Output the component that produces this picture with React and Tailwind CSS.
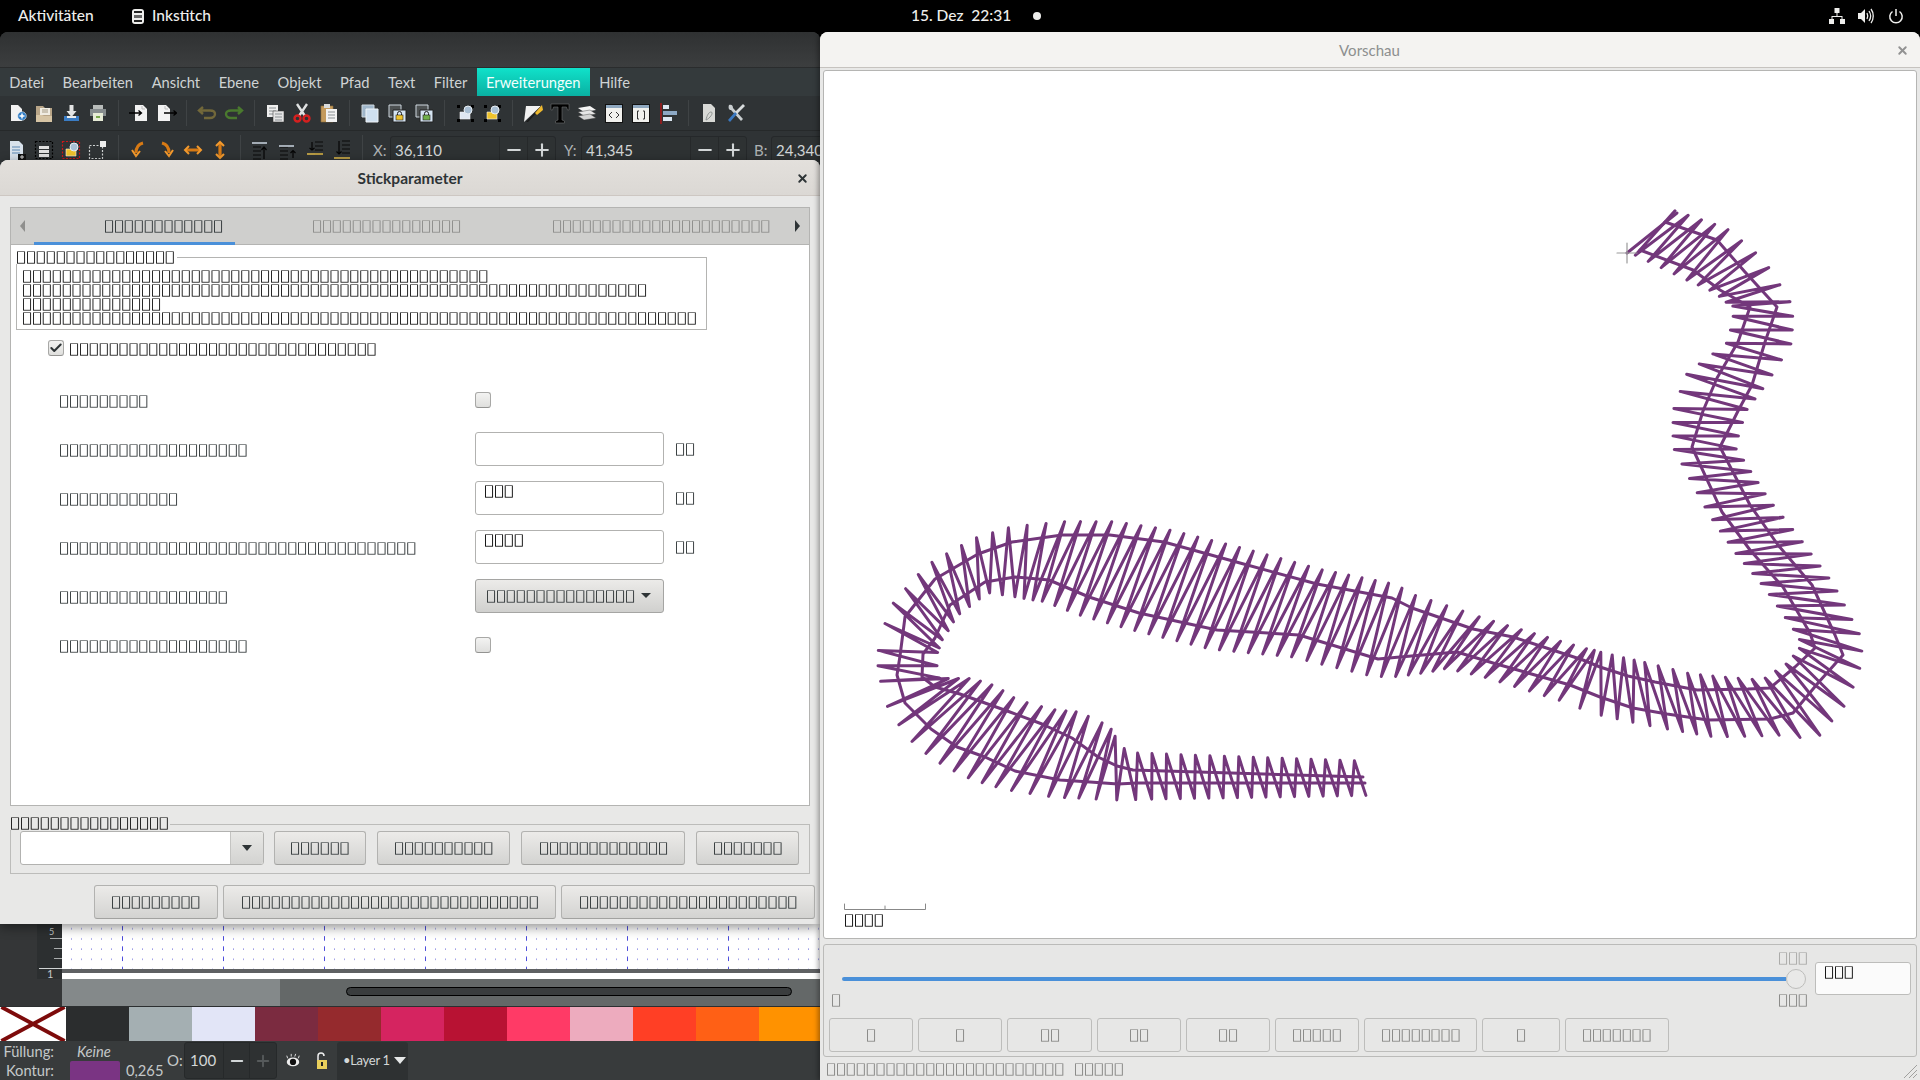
import { Check, Minus, Plus, X } from "lucide-react"

const PURPLE = "#73377b"

// rail A xy, rail B xy, how far the stitch overshoots each rail
const rungs = [
  [1665, 222, 1640, 250, 15, 7], [1717, 240, 1693, 270, 15, 12], [1745, 272, 1720, 290, 22, 5], [1777, 307, 1750, 307, 16, 15],
  [1765, 342, 1738, 342, 27, 10], [1752, 385, 1717, 378, 12, 30], [1738, 411, 1703, 411, 8, 30], [1720, 447, 1692, 447, 15, 19],
  [1750, 505, 1722, 512, 20, 13], [1778, 545, 1750, 550, 24, 15], [1812, 585, 1783, 587, 21, 18], [1835, 635, 1810, 633, 26, 15],
  [1843, 655, 1815, 648, 20, 13], [1818, 683, 1795, 667, 35, 8], [1793, 713, 1770, 688, 35, 11], [1770, 719, 1748, 689, 20, 13],
  [1708, 720, 1697, 690, 18, 17], [1667, 714, 1655, 682, 17, 20], [1633, 708, 1628, 676, 15, 18], [1600, 697, 1600, 667, 18, 15],
  [1570, 685, 1583, 660, 18, 12], [1493, 663, 1513, 637, 17, 10], [1457, 652, 1473, 629, 20, 14], [1400, 657, 1412, 608, 20, 13],
  [1378, 659, 1392, 598, 18, 14], [1299, 635, 1317, 584, 23, 15], [1217, 630, 1240, 563, 20, 15], [1139, 613, 1164, 542, 18, 13],
  [1089, 597, 1110, 535, 20, 14], [1049, 580, 1062, 535, 22, 14], [1015, 577, 1012, 542, 20, 15], [985, 582, 978, 554, 11, 16],
  [950, 605, 935, 579, 13, 16], [935, 638, 905, 617, 7, 18], [923, 654, 900, 656, 14, 23], [922, 677, 897, 675, 15, 18],
  [935, 687, 905, 703, 17, 18], [960, 694, 931, 729, 20, 23], [985, 703, 957, 747, 20, 23], [1010, 712, 985, 757, 14, 26],
  [1042, 724, 1015, 771, 17, 21], [1072, 738, 1060, 780, 27, 18], [1098, 757, 1090, 782, 33, 17], [1117, 766, 1118, 784, 29, 16],
  [1133, 770, 1137, 783, 18, 17], [1363, 777, 1365, 783, 17, 13],
]

function buildStitches() {
  const lens = [0]
  for (let i = 1; i < rungs.length; i++) {
    const [a, b, c, d] = rungs[i - 1]
    const [e, f, g, h] = rungs[i]
    lens.push(lens[i - 1] + Math.hypot((e + g - a - c) / 2, (f + h - b - d) / 2))
  }
  const total = lens[lens.length - 1]
  let zig = ""
  let i = 0
  for (let s = 0; s <= total; s += 14.4) {
    while (i < lens.length - 2 && lens[i + 1] < s) i++
    const t = (s - lens[i]) / (lens[i + 1] - lens[i])
    const p = rungs[i].map((v, k) => v + (rungs[i + 1][k] - v) * t)
    const d = Math.hypot(p[0] - p[2], p[1] - p[3]) || 1
    const ux = (p[0] - p[2]) / d
    const uy = (p[1] - p[3]) / d
    const a = `${(p[0] + ux * p[4]).toFixed(1)} ${(p[1] + uy * p[4]).toFixed(1)}`
    const b = `${(p[2] - ux * p[5]).toFixed(1)} ${(p[3] - uy * p[5]).toFixed(1)}`
    zig += `${zig ? "L" : "M"}${a}L${b}`
  }
  const railA = "M" + rungs.map((r) => `${r[0]} ${r[1]}`).join("L")
  const railB = "M" + rungs.map((r) => `${r[2]} ${r[3]}`).join("L")
  return { zig, railA, railB }
}

const stitches = buildStitches()

// the labels in this screenshot have no glyphs, they show up as empty boxes
const T = ({ n, className = "" }) => (
  <span className={"inline-block h-[14px] scale-y-[0.82] will-change-transform font-['DejaVu_Sans'] text-[16.550px] leading-[14px] whitespace-nowrap " + className}>
    {"\uE000".repeat(n)}
  </span>
)

const Btn = ({ n, className = "" }) => (
  <div className={"flex h-[34px] items-center justify-center rounded-[3px] border border-[#b2b2b0] border-b-[#a2a2a0] bg-linear-to-b from-[#ecebe9] to-[#d3d3d1] text-[#2e3436] " + className}>
    <T n={n} />
  </div>
)

const Box = ({ checked }) => (
  <div className="flex h-4 w-4 items-center justify-center rounded-[3px] border border-[#a8a8a6] border-b-[#939391] bg-linear-to-b from-[#f3f3f2] to-[#dfdfdd]">
    {checked && <Check size={14} strokeWidth={3.5} className="text-[#2e3436]" />}
  </div>
)

const Field = ({ n }) => (
  <div className="flex items-center">
    <div className="flex h-[34px] w-[189px] items-start rounded-[3px] border border-[#b2b2b0] bg-white pl-2 pt-[2px] text-black">
      {n > 0 && <T n={n} />}
    </div>
    <T n={2} className="ml-[11px] text-[#2e3436]" />
  </div>
)

const Row = ({ n, children }) => (
  <div className="flex h-[49px] items-center pl-[48px]">
    <div className="flex w-[416px] pt-[2px] text-[#2e3436]"><T n={n} /></div>
    {children}
  </div>
)

const I = ({ children }) => (
  <div className="flex w-[27px] shrink-0 items-center justify-center">
    <svg width="22" height="22" viewBox="0 0 22 22">{children}</svg>
  </div>
)

const Sep = () => (
  <div className="flex w-[14px] shrink-0 justify-center self-stretch py-1"><div className="w-px bg-[#3f4345]" /></div>
)

const Lines = ({ x = 8, y = 8, c = "#8a9093", w = 6 }) => (
  <path d={`M${x} ${y}h${w}M${x} ${y + 3}h${w}M${x} ${y + 6}h${w}`} stroke={c} fill="none" />
)
// little handles at the corners of a selection
const Corners = ({ c = "#000" }) => (
  <path d="M3 3h3v3H3zM17 3h3v3h-3zM3 17h3v3H3zM17 17h3v3h-3z" fill={c} />
)
const Shape = ({ fill = "#dfe7f2" }) => (
  <>
    <path d="M6 10h10v7H6z" fill={fill} stroke="#f3f3f3" strokeWidth=".6" />
    <circle cx="14" cy="8" r="4" fill="#a9bfd4" stroke="#e8eef3" />
  </>
)
const DashBox = ({ c = "#000" }) => (
  <rect x="2.500" y="2.500" width="17" height="17" fill="none" stroke={c} strokeWidth="1.200" strokeDasharray="2 1.500" />
)
const Lock = ({ c }) => (
  <>
    <path d="M7 8h13v12H7z" fill="#d5e4f2" stroke="#222" />
    <rect x="10" y="13" width="7" height="5" fill={c} stroke="#222" strokeWidth=".6" />
    <path d="M11.500 13v-1.500a2 2 0 0 1 4 0V13" fill="none" stroke="#222" />
  </>
)
const Bars = ({ x = 3, y = 7, w = 8 }) => (
  <path d={`M${x} ${y}h${w}M${x} ${y + 4}h${w}M${x} ${y + 8}h${w}M${x} ${y + 12}h${w}`} stroke="#1c1e1f" strokeWidth="2.200" />
)
const Arrow = ({ d, head }) => (
  <>
    <path d={d} fill="none" stroke="#d87a14" strokeWidth="3.200" />
    <path d={head} fill="none" stroke="#f39a2e" strokeWidth="2" />
  </>
)

const row1 = [
  [<path d="M5 3h7l4 4v12H5z" fill="#f2f2f2" />, <circle cx="16" cy="14" r="4.300" fill="#2e7bc4" stroke="#e8eef3" strokeWidth=".6" />, <path d="M13.500 14h5M16 11.500v5" stroke="#fff" strokeWidth="1.500" />],
  [<path d="M3 4h7l2 2h7v14H3z" fill="#b8a588" />, <path d="M7 6h10v7H7z" fill="#f0ece2" />, <path d="M9 8h6M9 10h6" stroke="#a59a84" />, <path d="M3 13h6l2 1h8v6H3z" fill="#d6c4a4" />],
  [<path d="M4 14h15v5H4z" fill="#3a7cc4" />, <path d="M7 14h9v2H7z" fill="#eee" />, <path d="M9.500 3h4v6h3l-5 6-5-6h3z" fill="#e3e4e4" />],
  [<path d="M6 3h10v5H6z" fill="#b8bcba" />, <path d="M3 7h16v7H3z" fill="#868c8e" />, <path d="M6 11h10v8H6z" fill="#e6ebd6" />, <path d="M9 15h4" stroke="#79a84e" strokeWidth="2" />],
  "sep",
  [<path d="M7 3h8l4 4v12H7z" fill="#f2f2f2" />, <path d="M14 4v3h3" fill="none" stroke="#bbb" />, <path d="M1 11h12M10.500 8.500L13.500 11l-3 2.500" stroke="#000" strokeWidth="1.300" fill="none" />],
  [<path d="M3 3h8l4 4v12H3z" fill="#f2f2f2" />, <path d="M10 4v3h3" fill="none" stroke="#bbb" />, <path d="M9 11h12M18.500 8.500l3 2.500-3 2.500" stroke="#000" strokeWidth="1.300" fill="none" />],
  "sep",
  [<path d="M7 5L3 8.500l4 3.500M4 8.500h10c3 0 5 1.500 5 3.500s-2 4-5 4H8" fill="none" stroke="#72683a" strokeWidth="2.400" />],
  [<path d="M15 5l4 3.500-4 3.500M18 8.500H8c-3 0-5 1.500-5 3.500s2 4 5 4h6" fill="none" stroke="#4a7a2e" strokeWidth="2.400" />],
  "sep",
  [<path d="M3 3h11v12H3z" fill="#eeeeee" />, <Lines x={5} y={6} w={7} />, <path d="M9 9h11v11H9z" fill="#e4e4e4" stroke="#333" strokeWidth=".5" />, <Lines x={11} y={12} w={7} />],
  [<path d="M6 2l8 12M16 2L8 14" stroke="#dfe1e1" strokeWidth="2.400" />, <circle cx="6.500" cy="16.500" r="3" fill="none" stroke="#d4201f" strokeWidth="2.400" />, <circle cx="15.500" cy="16.500" r="3" fill="none" stroke="#d4201f" strokeWidth="2.400" />],
  [<path d="M3 4h12v16H3z" fill="#c49a5c" stroke="#8e6f3c" strokeWidth=".6" />, <path d="M6 2h6v4H6z" fill="#d9dbdb" />, <path d="M8 7h11v13H8z" fill="#f2f2f2" />, <Lines x={10} y={10} w={7} />],
  "sep",
  [<path d="M3 3h12v12H3z" fill="#9fb6ca" stroke="#cfd8df" />, <path d="M7 7h12v13H7z" fill="#cfe0f0" stroke="#eef3f7" />],
  [<path d="M3 3h12v12H3z" fill="#4d5152" stroke="#cfd8df" />, <Lock c="#efc32c" />],
  [<path d="M3 3h12v12H3z" fill="#4d5152" stroke="#cfd8df" />, <Lock c="#6fb04a" />],
  "sep",
  [<Corners />, <Shape />],
  [<Corners />, <Shape fill="#efc32c" />],
  "sep",
  [<path d="M2 20L4 4h15z" fill="#f2f2f2" />, <path d="M4 20h2L19 6V4z" fill="#1a1a1a" />, <path d="M20 3l1 5-6 5-2-2z" fill="#eeb92e" />],
  [<path d="M2 2h18v6h-1.500l-1-3H13v13l2.500 1v2h-9v-2l2.500-1V5H4.500l-1 3H2z" fill="#000" stroke="#6b6e6e" strokeWidth=".6" />],
  [<path d="M2 6l12-2 6 4-12 2z" fill="#f4f4f4" />, <path d="M2 10l12-2 6 4-12 2z" fill="#e6e6e6" stroke="#333" strokeWidth=".4" />, <path d="M2 14l12-2 6 4-12 2z" fill="#d4d4d4" stroke="#333" strokeWidth=".4" />],
  [<rect x="2.500" y="2.500" width="17" height="18" fill="#f1f1ee" stroke="#111" />, <path d="M3 3h16v3H3z" fill="#8fa8c0" />, <path d="M9 10l-3 3 3 3M13 10l3 3-3 3" fill="none" stroke="#333" />],
  [<rect x="2.500" y="2.500" width="17" height="18" fill="#f1f1ee" stroke="#111" />, <path d="M3 3h16v3H3z" fill="#8fa8c0" />, <path d="M9 9H7.500v8H9M13 9h1.500v8H13" fill="none" stroke="#333" />],
  [<path d="M4 1v21" stroke="#a81818" strokeWidth="1.500" />, <path d="M6 3h6v4H6z" fill="#dce7f2" />, <path d="M6 9h14v4H6z" fill="#8ca8c4" />, <path d="M6 15h9v4H6z" fill="#dce7f2" />],
  "sep",
  [<path d="M5 2h8l4 4v14H5z" fill="#d8d9d6" />, <path d="M8 18c1-5 3-8 5-8s1 3-1 5-2 2-4 3z" fill="none" stroke="#8d9290" />],
  [<path d="M4 3c3-1 4 1 4 3l10 11-2 2L6 8C4 8 3 6 4 3z" fill="#c9ced0" />, <path d="M18 2l2 2-8 8-2-2z" fill="#d8dcdd" />, <path d="M10 10l-7 8 2 2 7-8z" fill="#3a78c0" />],
]

const row2 = [
  [<path d="M4 2h9l4 4v15H4z" fill="#d8e2ec" />, <Lines x={6} y={8} w={8} c="#5b87b3" />, <rect x="12" y="15" width="8" height="6" fill="#111" />, <path d="M14 18h4M16 16v4" stroke="#ddd" />],
  [<DashBox />, <path d="M6 7h10v3H6zM6 11h10v3H6zM6 15h10v3H6z" fill="#e0e0e0" />],
  [<DashBox c="#d01818" />, <Shape fill="#efc32c" />],
  [<rect x="2.500" y="6.500" width="13" height="13" fill="none" stroke="#cfd2d2" strokeWidth="1.200" strokeDasharray="2 1.500" />, <rect x="13" y="2" width="6" height="6" fill="#eee" />],
  "sep",
  [<Arrow d="M15 4c-4 1-7 4-7 10" head="M4 11l4 6 4-5" />],
  [<Arrow d="M7 4c4 1 7 4 7 10" head="M10 12l4 5 4-6" />],
  [<Arrow d="M4 11h14" head="M7 7l-4 4 4 4M15 7l4 4-4 4" />],
  [<Arrow d="M11 4v14" head="M7 7l4-4 4 4M7 15l4 4 4-4" />],
  "sep",
  [<Bars y={8} />, <path d="M2 4h15" stroke="#cbd6e0" strokeWidth="1.600" />, <path d="M14 20V8M11.500 11L14 8l2.500 3" stroke="#050505" strokeWidth="1.200" fill="none" />],
  [<Bars y={8} />, <path d="M2 7h15" stroke="#cbd6e0" strokeWidth="1.600" />, <path d="M16 19v-7M13.500 14l2.500-2.500 2.500 2.500" stroke="#050505" strokeWidth="1.200" fill="none" />],
  [<Bars x={11} y={3} w={8} />, <path d="M3 15h16" stroke="#e6c04c" strokeWidth="1.600" />, <path d="M8 3v8M5.500 9L8 11l2.500-2" stroke="#050505" strokeWidth="1.200" fill="none" />],
  [<Bars x={11} y={2} w={8} />, <path d="M3 19h16" stroke="#e6c04c" strokeWidth="1.600" />, <path d="M8 2v13M5.500 12.500L8 15l2.500-2.500" stroke="#050505" strokeWidth="1.200" fill="none" />],
  "sep",
]

const Tools = ({ items }) =>
  items.map((it, i) => (it === "sep" ? <Sep key={i} /> : <I key={i}>{it}</I>))

const Spin = ({ label, value, wide = true, className = "" }) => (
  <>
    <span className={"w-[17px] text-[15px] text-[#aeb2b3] " + className}>{label}</span>
    <div className={"flex h-7 shrink-0 items-center rounded-t-[3px] border border-[#25282a] bg-[#2e3233] pl-[4px] text-[15px] " + (wide ? "w-[166px]" : "w-[60px]")}>
      <span className="w-[105px] text-[#d3d7d8]">{value}</span>
      <div className="flex h-full w-7 items-center justify-center border-l border-[#26292a]"><Minus size={20} strokeWidth={2.5} className="text-[#d3d7d8]" /></div>
      <div className="flex h-full w-7 items-center justify-center border-l border-[#26292a]"><Plus size={20} strokeWidth={2.5} className="text-[#d3d7d8]" /></div>
    </div>
  </>
)

const menus = ["Datei", "Bearbeiten", "Ansicht", "Ebene", "Objekt", "Pfad", "Text", "Filter", "Erweiterungen", "Hilfe"]
const swatches = ["bg-[#2b2d2e]", "bg-[#a4afb2]", "bg-[#e2e5f7]", "bg-[#7b2b40]", "bg-[#952a2d]", "bg-[#d52460]", "bg-[#b81233]", "bg-[#ff3a66]", "bg-[#edabbe]", "bg-[#ff3f25]", "bg-[#ff6015]", "bg-[#ff9200]"]
const playBtns = [
  [1, "w-[84px]"], [1, "w-[84px]"], [2, "w-[85px]"], [2, "w-[84px]"], [2, "w-[84px]"],
  [5, "w-[84px]"], [8, "w-[113px]"], [1, "w-[78px]"], [7, "w-[104px]"],
]

function Topbar() {
  return (
    <div className="flex h-8 items-center bg-black pl-[18px] pr-4 font-['Lato'] text-[15.5px] font-medium text-[#eeeeec]">
      <span className="w-[114px]">Aktivitäten</span>
      <div className="mr-[8px] flex h-[15px] w-[12px] flex-col items-center justify-center gap-[2px] rounded-[3px] bg-[#eeeeec]">
        <div className="h-[2px] w-2 bg-[#222]" />
        <div className="h-[3px] w-2 bg-[#666]" />
        <div className="h-[2px] w-2 bg-[#222]" />
      </div>
      <span className="w-[60px]">Inkstitch</span>
      <span className="ml-[699px] w-[122px]">15. Dez&nbsp; 22:31</span>
      <div className="h-2 w-2 rounded-full bg-[#eeeeec]" />
      <div className="ml-auto flex items-center gap-[13px]">
        <svg width="16" height="16" viewBox="0 0 16 16" fill="#eeeeec">
          <path d="M5.500 0h5v5h-5zM0 11h5v5H0zM11 11h5v5h-5zM7.500 5h1v3h5v3h-1V9h-9v2h-1V8h5z" />
        </svg>
        <svg width="16" height="16" viewBox="0 0 16 16" fill="none" stroke="#eeeeec">
          <path d="M0 5h3l4-4v14l-4-4H0z" fill="#eeeeec" stroke="none" />
          <path d="M9 5c1 2 1 4 0 6M11 3c2 3 2 7 0 10M13 1c3 4 3 10 0 14" strokeWidth="1.300" />
        </svg>
        <svg width="16" height="16" viewBox="0 0 16 16" fill="none" stroke="#eeeeec" strokeWidth="1.500" className="ml-[1px]">
          <path d="M8 1v7M4.500 3.500a6.200 6.200 0 1 0 7 0" />
        </svg>
      </div>
    </div>
  )
}

function MainWindow() {
  return (
    <div className="absolute left-0 top-8 flex h-[1048px] w-[820px] flex-col overflow-hidden rounded-t-lg bg-[#383b3c] font-['Lato'] text-[14.7px]">
      <div className="h-9 shrink-0 border-b border-[#2a2c2d] bg-linear-to-b from-[#2f3132] to-[#3c3e3f]" />
      <div className="flex h-[28px] shrink-0 items-stretch bg-[#343a3c] text-[#cfd3d4]">
        {menus.map((m) => (
          <div
            key={m}
            className={"flex items-center px-[9.300px] " + (m === "Erweiterungen" ? "bg-linear-to-b from-[#10e2ca] to-[#0ab0a2] text-[#f2fffd]" : "")}
          >
            {m}
          </div>
        ))}
      </div>
      <div className="flex h-[35px] shrink-0 items-stretch border-b border-[#26292a] bg-[#2f3335] pl-[3px]">
        <Tools items={row1} />
      </div>
      <div className="flex h-[38px] shrink-0 items-stretch bg-[#2f3335] pl-[3px]">
        <Tools items={row2} />
        <div className="flex items-center">
          <Spin label="X:" value="36,110" className="ml-[4px]" />
          <Spin label="Y:" value="41,345" className="ml-[8px]" />
          <Spin label="B:" value="24,340" wide={false} className="ml-[7px]" />
        </div>
      </div>

      <div className="flex min-h-0 flex-1 bg-[#343637]">
        <div className="w-[37px]" />
        <div className="relative w-[25px] bg-[#2c2f30] text-[11px] leading-none text-[#c4c8c8]">
          <span className="absolute bottom-0 left-[10px]">1</span>
          <span className="absolute bottom-[43px] left-[12px] text-[9px]">5</span>
          <div className="absolute bottom-[10px] left-[2px] h-px w-[23px] bg-[#d0d3d3]" />
          <div className="absolute bottom-[20px] right-0 h-px w-2 bg-[#a9acac]" />
          <div className="absolute bottom-[30px] right-0 h-px w-2 bg-[#a9acac]" />
          <div className="absolute bottom-[40px] right-0 h-px w-3 bg-[#a9acac]" />
        </div>
        <div className="flex flex-1 flex-col justify-end bg-white">
          <svg className="h-[45px] w-full shrink-0">
            <defs>
              <pattern id="grid" x="60" y="0" width="101" height="10.200" patternUnits="userSpaceOnUse">
                {[0, 10, 20, 30, 40, 50, 60, 70, 80, 90].map((x) => (
                  <rect key={x} x={x} y="4" width="1" height="1.500" fill="#9a9ae6" />
                ))}
                <rect x="0" y="2" width="1" height="4.500" fill="#4b4bdc" />
              </pattern>
            </defs>
            <rect width="100%" height="100%" fill="url(#grid)" />
          </svg>
          <div className="h-1 shrink-0 bg-[#5f6163]" />
          <div className="h-[6px] shrink-0 bg-white" />
        </div>
      </div>

      <div className="flex h-[27px] shrink-0 bg-[#343637]">
        <div className="w-[62px]" />
        <div className="w-[218px] bg-[#84898a]" />
        <div className="flex flex-1 items-center bg-[#646868] pl-[66px]">
          <div className="-mt-[2px] h-[9px] w-[446px] rounded-[5px] border border-black bg-[#3a3d3e]" />
        </div>
      </div>
      <div className="flex h-[35px] shrink-0 border-t border-[#2c2f30]">
        <div className="w-[66px] shrink-0 bg-white">
          <svg viewBox="0 0 65 35" className="h-full w-full">
            <path d="M0 0L65 35M65 0L0 35" stroke="#7d0b0b" strokeWidth="4" />
          </svg>
        </div>
        {swatches.map((s) => (
          <div key={s} className={"w-[63px] shrink-0 " + s} />
        ))}
      </div>
      <div className="flex h-[39px] shrink-0 items-center bg-[#383b3c] text-[#c4c8c9]">
        <div className="flex w-[54px] flex-col items-end gap-[1px] leading-[18px]">
          <span>Füllung:</span>
          <span>Kontur:</span>
        </div>
        <div className="ml-[16px] flex w-[100px] flex-col">
          <span className="ml-[7px] h-[19px] italic leading-[18px]">Keine</span>
          <div className="flex items-center">
            <div className="h-[19px] w-[50px] rounded-t-[2px] bg-[#7a3483]" />
            <span className="ml-[6px] leading-[19px]">0,265</span>
          </div>
        </div>
        <span className="-ml-[3px] w-[17px] text-[15px]">O:</span>
        <div className="flex h-[37px] w-[93px] items-center rounded-[3px] border border-[#26292a] bg-[#2e3132] pl-[5px] text-[15px] text-[#d3d7d8]">
          <span className="w-[33px]">100</span>
          <div className="flex h-full w-[26px] items-center justify-center border-l border-[#26292a]"><Minus size={18} strokeWidth={2.500} /></div>
          <div className="flex h-full w-[26px] items-center justify-center border-l border-[#26292a]"><Plus size={18} strokeWidth={2.500} className="text-[#565a5b]" /></div>
        </div>
        <svg width="16" height="16" viewBox="0 0 18 18" className="ml-[8px]">
          <ellipse cx="9" cy="10" rx="7" ry="5" fill="#eee" />
          <circle cx="9" cy="10" r="3.500" fill="#111" />
          <path d="M3 6L2 3M7 4V1M11 4l1-3M15 6l1-3" stroke="#eee" />
        </svg>
        <svg width="14" height="18" viewBox="0 0 14 18" className="ml-[14px]">
          <path d="M3 8V4a3 3 0 0 1 6 0" fill="none" stroke="#eee" strokeWidth="1.500" />
          <rect x="2" y="8" width="10" height="9" fill="#e9cf5b" />
          <rect x="6" y="10" width="2" height="4" fill="#222" />
        </svg>
        <div className="ml-[8px] flex h-[38px] w-[71px] items-center rounded-t-[3px] bg-[#2e3132] pl-[6px] text-[13px] text-[#d3d7d8]">
          <span className="font-['Lato'] tracking-[-0.3px]">•Layer 1</span>
          <div className="ml-[4px] h-0 w-0 border-x-[6px] border-t-[7px] border-x-transparent border-t-[#e6e8e8]" />
        </div>
      </div>
    </div>
  )
}

function Dialog() {
  return (
    <div className="absolute left-0 top-[160px] z-10 flex h-[764px] w-[820px] flex-col rounded-t-lg bg-[#e8e8e7] shadow-[0_3px_12px_rgba(0,0,0,0.45)]">
      <div className="relative flex h-9 shrink-0 items-center justify-center rounded-t-lg border-b border-[#cdc7c2] bg-linear-to-b from-[#e3e0dc] to-[#dbd8d4] pt-[2px] font-['Lato'] text-[15.5px] font-bold text-[#2e3436]">
        Stickparameter
        <X size={13} strokeWidth={3.5} className="absolute right-[11px] top-[12px] text-[#2e3436]" />
      </div>
      <div className="mx-[10px] mt-[11px] flex h-[599px] flex-col border border-[#b4b4b2] bg-white">
        <div className="flex h-[37px] shrink-0 items-center border-b border-[#b4b4b2] bg-[#cfcfcd]">
          <div className="ml-[9px] h-0 w-0 border-y-[6px] border-r-[5px] border-y-transparent border-r-[#8f8f8d]" />
          <div className="relative ml-[9px] flex h-full w-[201px] items-center pl-[70px] text-[#2e3436]">
            <T n={12} />
            <div className="absolute bottom-[-1px] left-0 right-0 h-[3px] bg-[#4a90d9]" />
          </div>
          <T n={15} className="ml-[77px] text-[#8c8c8a]" />
          <T n={22} className="ml-[91px] text-[#8c8c8a]" />
          <div className="ml-auto mr-[9px] h-0 w-0 border-y-[6px] border-l-[5px] border-y-transparent border-l-[#2e3436]" />
        </div>
        <div className="relative ml-[5px] mt-[12px] h-[73px] w-[691px] shrink-0 border border-[#b4b4b2] pl-[5px] pt-[11px] text-[#111]">
          <div className="absolute -left-px -top-[8px] flex bg-white pr-[2px]"><T n={16} /></div>
          <div className="flex flex-col items-start">
            <T n={47} />
            <T n={63} />
            <T n={14} />
            <T n={68} />
          </div>
        </div>
        <div className="flex h-[36px] shrink-0 items-center gap-[5px] pl-[37px] text-[#111]">
          <Box checked />
          <T n={31} className="mt-[2px]" />
        </div>
        <div className="mt-[9px] flex flex-col">
          <Row n={9}><Box /></Row>
          <Row n={19}><Field n={0} /></Row>
          <Row n={12}><Field n={3} /></Row>
          <Row n={36}><Field n={4} /></Row>
          <Row n={17}>
            <div className="flex h-[34px] w-[189px] items-center rounded-[3px] border border-[#a5a5a3] bg-linear-to-b from-[#ecebe9] to-[#d0d0ce] pl-[10px] text-[#2e3436]">
              <T n={15} />
              <div className="ml-[6px] h-0 w-0 border-x-[5px] border-t-[5px] border-x-transparent border-t-[#2e3436]" />
            </div>
          </Row>
          <Row n={19}><Box /></Row>
        </div>
      </div>
      <div className="relative mx-[10px] mt-[18px] flex h-[50px] shrink-0 gap-[10px] border border-[#bcbcba] pl-[9px] pt-[6px]">
        <div className="absolute -left-px -top-[9px] flex bg-[#e8e8e7] pr-[1px] text-[#111]"><T n={16} /></div>
        <div className="flex h-[34px] w-[244px] overflow-hidden rounded-[3px] border border-[#b2b2b0] bg-white">
          <div className="flex-1" />
          <div className="flex w-[33px] items-center justify-center border-l border-[#c4c4c2] bg-linear-to-b from-[#e8e8e6] to-[#d3d3d1]">
            <div className="h-0 w-0 border-x-[5px] border-t-[6px] border-x-transparent border-t-[#2e3436]" />
          </div>
        </div>
        <div className="flex gap-[11px]">
          <Btn n={6} className="w-[92px]" />
          <Btn n={10} className="w-[133px]" />
          <Btn n={13} className="w-[164px]" />
          <Btn n={7} className="w-[103px]" />
        </div>
      </div>
      <div className="mt-[11px] flex justify-end gap-[5px] pr-[5px]">
        <Btn n={9} className="w-[124px]" />
        <Btn n={30} className="w-[333px]" />
        <Btn n={22} className="w-[254px]" />
      </div>
    </div>
  )
}

function Preview() {
  return (
    <div className="absolute left-[820px] top-8 z-20 flex h-[1048px] w-[1100px] flex-col rounded-t-lg bg-[#e8e8e7] shadow-[-2px_0_5px_rgba(0,0,0,0.35)]">
      <div className="relative flex h-9 shrink-0 items-center justify-center rounded-t-lg border-b border-[#c6c3bf] bg-[#f4f3f1] pt-[1px] font-['Lato'] text-[15px] text-[#8d8f8f]">
        <span className="-ml-[1px]">Vorschau</span>
        <X size={13} strokeWidth={3.5} className="absolute right-[11px] top-[12px] text-[#929292]" />
      </div>
      <div className="relative mx-[3px] mt-[2px] h-[869px] shrink-0 rounded-[3px] border border-[#b5b5b3] bg-white">
        <svg className="absolute left-0 top-0 h-[867px] w-[1092px]" viewBox="824 71 1092 867" fill="none" strokeLinejoin="round" strokeLinecap="round">
          <g stroke={PURPLE} strokeWidth="3">
            <path d="M1627 253L1677 213" />
            <path d={stitches.railA} />
            <path d={stitches.railB} />
            <path d={stitches.zig} />
          </g>
          <path d="M1617 253h20M1627 243v20" stroke="#9a9a9a" strokeWidth="1.200" />
          <path d="M844.500 904v5.500h81V904M885 906v3" stroke="#888" strokeWidth="1" />
        </svg>
        <T n={4} className="absolute left-[20px] top-[842px] text-black" />
      </div>
      <div className="mx-[3px] mt-[5px] h-[113px] shrink-0 rounded-[3px] border border-[#bbbbb9] bg-[#e7e7e6]">
        <div className="flex h-[73px] pl-[7px] pr-[5px]">
          <div className="flex w-[978px] flex-col pt-[6px]">
            <T n={3} className="self-end pr-[1px] text-[#a8a8a6]" />
            <div className="flex h-[28px] items-center pl-[11px] pr-[3px]">
              <div className="h-1 flex-1 rounded-l-sm bg-[#4a90d9]" />
              <div className="h-5 w-5 rounded-full border border-[#bdbdbb] bg-[#e9e9e8]" />
            </div>
            <div className="flex items-center justify-between pr-[1px] text-[#858583]">
              <T n={1} />
              <T n={3} />
            </div>
          </div>
          <div className="ml-[6px] mt-[17px] flex h-[33px] w-[96px] items-start rounded-[3px] border border-[#bdbdbb] bg-[#fbfbfb] pl-2 pt-[2px] text-black">
            <T n={3} />
          </div>
        </div>
        <div className="flex gap-[5px] pl-[5px]">
          {playBtns.map(([n, w], i) => (
            <div key={i} className={"flex h-[34px] items-center justify-center rounded-[3px] border border-[#bdbdbb] text-[#858583] " + w}>
              <T n={n} />
            </div>
          ))}
        </div>
      </div>
      <div className="relative flex flex-1 items-center gap-[10px] pl-[6px] text-[#858583]">
        <T n={24} />
        <T n={5} />
        <svg width="14" height="14" viewBox="0 0 14 14" className="absolute bottom-[2px] right-[3px]">
          <path d="M1 14L14 1M6 14l8-8M10 14l4-4" stroke="#a0a09e" />
        </svg>
      </div>
    </div>
  )
}

export default function App() {
  return (
    <div className="relative h-[1080px] w-[1920px] overflow-hidden bg-black">
      <Topbar />
      <MainWindow />
      <Dialog />
      <Preview />
    </div>
  )
}
